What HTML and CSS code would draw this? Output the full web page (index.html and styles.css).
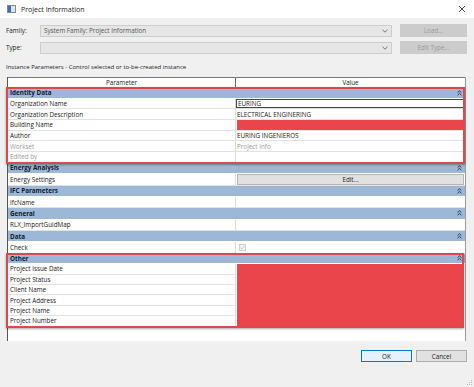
FILE: index.html
```html
<!DOCTYPE html>
<html>
<head>
<meta charset="utf-8">
<link rel="stylesheet" href="styles.css">
</head>
<body>
<div class="window">
  <div class="titlebar">
    <svg class="appicon" width="9" height="8" viewBox="0 0 9 8"><rect x="0.5" y="0.5" width="8" height="7" fill="#dfe6ee" stroke="#7d8a99"/><rect x="1" y="1" width="3" height="6" fill="#3f6fa8"/></svg>
    <span class="title">Project Information</span>
    <svg class="close" width="8" height="8" viewBox="0 0 8 8"><path d="M1 1L7 7M7 1L1 7" stroke="#333" stroke-width="0.9"/></svg>
  </div>
  <div class="content">
    <div class="formrow first">
      <span class="label">Family:</span>
      <div class="combo"><span>System Family: Project Information</span><svg class="chev" width="6" height="4" viewBox="0 0 6 4"><path d="M0.5 0.8L3 3.2L5.5 0.8" fill="none" stroke="#555" stroke-width="0.8"/></svg></div>
      <div class="btn disabled">Load...</div>
    </div>
    <div class="formrow">
      <span class="label">Type:</span>
      <div class="combo"><span></span><svg class="chev" width="6" height="4" viewBox="0 0 6 4"><path d="M0.5 0.8L3 3.2L5.5 0.8" fill="none" stroke="#555" stroke-width="0.8"/></svg></div>
      <div class="btn disabled">Edit Type...</div>
    </div>
    <div class="caption">Instance Parameters - Control selected or to-be-created instance</div>

    <div class="table">
      <div class="thead">
        <div class="th">Parameter</div>
        <div class="th">Value</div>
      </div>

      <div class="section s-identity">
        <div class="grp"><span>Identity Data</span><svg class="collapse" width="5" height="6" viewBox="0 0 5 6"><path d="M0.6 2.6L2.5 0.8L4.4 2.6M0.6 5.2L2.5 3.4L4.4 5.2" fill="none" stroke="#1b2a44" stroke-width="0.9"/></svg></div>
        <div class="row"><div class="p">Organization Name</div><div class="v editing">EURING</div></div>
        <div class="row"><div class="p">Organization Description</div><div class="v">ELECTRICAL ENGINERING</div></div>
        <div class="row"><div class="p">Building Name</div><div class="v"><div class="redfill"></div></div></div>
        <div class="row"><div class="p">Author</div><div class="v">EURING INGENIEROS</div></div>
        <div class="row"><div class="p muted">Workset</div><div class="v muted">Project Info</div></div>
        <div class="row"><div class="p muted">Edited by</div><div class="v"></div></div>
      </div>

      <div class="section s-mid">
        <div class="grp"><span>Energy Analysis</span><svg class="collapse" width="5" height="6" viewBox="0 0 5 6"><path d="M0.6 2.6L2.5 0.8L4.4 2.6M0.6 5.2L2.5 3.4L4.4 5.2" fill="none" stroke="#1b2a44" stroke-width="0.9"/></svg></div>
        <div class="row"><div class="p">Energy Settings</div><div class="v"><div class="editbtn">Edit...</div></div></div>
        <div class="grp"><span>IFC Parameters</span><svg class="collapse" width="5" height="6" viewBox="0 0 5 6"><path d="M0.6 2.6L2.5 0.8L4.4 2.6M0.6 5.2L2.5 3.4L4.4 5.2" fill="none" stroke="#1b2a44" stroke-width="0.9"/></svg></div>
        <div class="row"><div class="p">IfcName</div><div class="v"></div></div>
        <div class="grp"><span>General</span><svg class="collapse" width="5" height="6" viewBox="0 0 5 6"><path d="M0.6 2.6L2.5 0.8L4.4 2.6M0.6 5.2L2.5 3.4L4.4 5.2" fill="none" stroke="#1b2a44" stroke-width="0.9"/></svg></div>
        <div class="row"><div class="p">RLX_ImportGuidMap</div><div class="v"></div></div>
        <div class="grp"><span>Data</span><svg class="collapse" width="5" height="6" viewBox="0 0 5 6"><path d="M0.6 2.6L2.5 0.8L4.4 2.6M0.6 5.2L2.5 3.4L4.4 5.2" fill="none" stroke="#1b2a44" stroke-width="0.9"/></svg></div>
        <div class="row"><div class="p">Check</div><div class="v"><svg class="check" width="7" height="7" viewBox="0 0 7 7"><rect x="0.5" y="0.5" width="6" height="6" fill="#f4f4f4" stroke="#cfcfcf"/><path d="M1.5 3.6L2.9 5L5.5 1.8" fill="none" stroke="#c4c4c4" stroke-width="0.9"/></svg></div></div>
      </div>

      <div class="section s-other">
        <div class="grp"><span>Other</span><svg class="collapse" width="5" height="6" viewBox="0 0 5 6"><path d="M0.6 2.6L2.5 0.8L4.4 2.6M0.6 5.2L2.5 3.4L4.4 5.2" fill="none" stroke="#1b2a44" stroke-width="0.9"/></svg></div>
        <div class="otherbody">
          <div class="params">
            <div class="p">Project Issue Date</div>
            <div class="p">Project Status</div>
            <div class="p">Client Name</div>
            <div class="p">Project Address</div>
            <div class="p">Project Name</div>
            <div class="p">Project Number</div>
          </div>
          <div class="vals"><div class="redblock"></div></div>
        </div>
      </div>

      <div class="filler"></div>

      <div class="hl hl1"></div>
      <div class="hl hl2"></div>
    </div>

    <div class="footer">
      <div class="btn ok">OK</div>
      <div class="btn">Cancel</div>
    </div>
  </div>
  <svg class="grip" width="6" height="6" viewBox="0 0 6 6"><g fill="#b8b8b8"><rect x="4" y="0" width="1" height="1"/><rect x="2" y="2" width="1" height="1"/><rect x="4" y="2" width="1" height="1"/><rect x="0" y="4" width="1" height="1"/><rect x="2" y="4" width="1" height="1"/><rect x="4" y="4" width="1" height="1"/></g></svg>
</div>
</body>
</html>
```

FILE: styles.css
```css
* { box-sizing: border-box; }
html, body { margin: 0; padding: 0; }
body {
  width: 474px;
  height: 387px;
  overflow: hidden;
  background: #f0f0f0;
  font-family: "Open Sans", "Noto Sans", sans-serif;
  font-size: 6.3px;
  color: #1a1a1a;
}
.window { position: relative; width: 474px; height: 387px; }
.titlebar {
  height: 18px;
  background: #fff;
  display: flex;
  align-items: center;
  padding: 0 6px 0 7px;
}
.appicon { margin-right: 5px; }
.title { font-size: 7px; color: #222; flex: 1; }
.close { margin-right: 2px; }
.content { padding: 0 7px 0 6px; }
.formrow {
  display: flex;
  align-items: center;
  height: 13px;
  margin-top: 4px;
}
.formrow.first { margin-top: 6px; }
.label { width: 34px; color: #222; }
.combo {
  width: 352px;
  height: 12px;
  background: #e6e6e6;
  border: 1px solid #cdcdcd;
  display: flex;
  align-items: center;
  justify-content: space-between;
  padding: 0 3px 0 3px;
  color: #555;
}
.btn {
  width: 67px;
  height: 13px;
  margin-left: 8px;
  display: flex;
  align-items: center;
  justify-content: center;
  background: #e1e1e1;
  border: 1px solid #adadad;
  color: #222;
}
.btn.disabled { background: #cccccc; border-color: #cccccc; color: #9a9a9a; }
.caption { margin-top: 9px; height: 9px; line-height: 9px; color: #222; font-size: 6px; }
.table {
  position: relative;
  margin: 5px 0 0 1px;
  width: 459px;
  height: 264px;
  background: #fff;
  border-left: 1px solid #555;
  border-right: 1px solid #999;
  display: flex;
  flex-direction: column;
}
.thead {
  display: grid;
  grid-template-columns: 228px 1fr;
  height: 11px;
  border-top: 1px solid #777;
  border-bottom: 1px solid #888;
}
.th {
  display: flex;
  align-items: center;
  justify-content: center;
  color: #222;
}
.th:first-child { border-right: 1px solid #666; }
.section { --rh: 10.7px; }
.s-mid { --rh: 11.37px; }
.s-other { --rh: 10.43px; }
.grp {
  height: var(--rh);
  background: #9db8d6;
  display: flex;
  align-items: center;
  justify-content: space-between;
  padding: 0 3px 0 2px;
  font-weight: 700;
  color: #0e1a30;
  border-bottom: 1px solid #fff;
}
.row {
  display: grid;
  grid-template-columns: 228px 1fr;
  height: var(--rh);
  border-bottom: 1px solid #e2e2e2;
}
.p, .v {
  display: flex;
  align-items: center;
  padding-left: 2px;
  white-space: nowrap;
  overflow: hidden;
}
.p { border-right: 1px solid #dcdcdc; }
.v { padding-left: 1px; }
.muted { color: #9a9a9a; }
.v.editing { border: 1px solid #444; }
.redfill { width: 100%; height: 100%; margin-right: 2px; background: #e9454a; }
.editbtn {
  width: 100%;
  height: 100%;
  background: #e1e1e1;
  border: 1px solid #b5b5b5;
  display: flex;
  align-items: center;
  justify-content: center;
  margin-right: 1px;
}
.check { margin-left: 2px; }
.otherbody { display: grid; grid-template-columns: 228px 1fr; }
.params .p { height: var(--rh); border-bottom: 1px solid #e2e2e2; }
.vals { padding: 0 3px 0 1px; }
.redblock { height: 100%; background: #e9454a; }
.filler { flex: 1; }
.hl {
  position: absolute;
  left: -2px;
  right: 0;
  border: 2px solid #de4750;
  box-shadow: 0 1px 2px rgba(0,0,0,0.35);
  pointer-events: none;
}
.hl1 { top: 10px; height: 77px; }
.hl2 { top: 176px; height: 75px; right: 1px; }
.footer {
  display: flex;
  justify-content: flex-end;
  margin-top: 9px;
}
.footer .btn { width: 51px; height: 12px; margin-left: 4px; }
.footer .btn.ok { background: #e5f1fb; border-color: #0078d7; }
.grip { position: absolute; right: 1px; bottom: 1px; }
```
